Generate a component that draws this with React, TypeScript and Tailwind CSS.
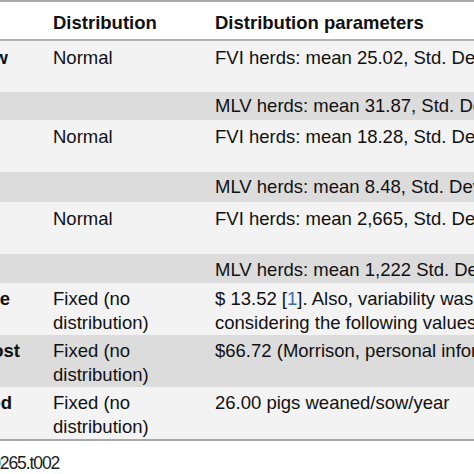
import React from 'react';

type Row = {
  name: string;
  namePad: string;
  dist: React.ReactNode;
  params: React.ReactNode;
  shade: 'light' | 'dark';
  height: string;
  pad: string;
};

const twoLines = (
  <>
    Fixed (no
    <br />
    distribution)
  </>
);

const rows: Row[] = [
  {
    name: 'Sows per herd per row',
    namePad: 'pr-[45px]',
    dist: 'Normal',
    params: 'FVI herds: mean 25.02, Std. Dev. 4.13',
    shade: 'light',
    height: 'h-[52px]',
    pad: 'pt-[4px]',
  },
  {
    name: '',
    namePad: '',
    dist: '',
    params: 'MLV herds: mean 31.87, Std. Dev. 5.91',
    shade: 'dark',
    height: 'h-[28px]',
    pad: 'pt-[1px]',
  },
  {
    name: '',
    namePad: '',
    dist: 'Normal',
    params: 'FVI herds: mean 18.28, Std. Dev. 3.40',
    shade: 'light',
    height: 'h-[52px]',
    pad: 'pt-[4px]',
  },
  {
    name: '',
    namePad: '',
    dist: '',
    params: 'MLV herds: mean 8.48, Std. Dev. 2.10',
    shade: 'dark',
    height: 'h-[30px]',
    pad: 'pt-[2px]',
  },
  {
    name: '',
    namePad: '',
    dist: 'Normal',
    params: 'FVI herds: mean 2,665, Std. Dev. 512',
    shade: 'light',
    height: 'h-[52px]',
    pad: 'pt-[4px]',
  },
  {
    name: '',
    namePad: '',
    dist: '',
    params: 'MLV herds: mean 1,222 Std. Dev. 301',
    shade: 'dark',
    height: 'h-[29px]',
    pad: 'pt-[3px]',
  },
  {
    name: 'Market price',
    namePad: 'pr-[43px]',
    dist: twoLines,
    params: (
      <>
        $ 13.52 [<span className="text-[#3a6ea8]">1</span>]. Also, variability was
        <br />
        considering the following values
      </>
    ),
    shade: 'light',
    height: 'h-[51px]',
    pad: 'pt-[3.5px] leading-[24px]',
  },
  {
    name: 'Feed cost',
    namePad: 'pr-[33px]',
    dist: twoLines,
    params: '$66.72 (Morrison, personal information)',
    shade: 'dark',
    height: 'h-[51px]',
    pad: 'pt-[4px] leading-[24px]',
  },
  {
    name: 'Pigs weaned',
    namePad: 'pr-[41px]',
    dist: twoLines,
    params: '26.00 pigs weaned/sow/year',
    shade: 'light',
    height: 'h-[51px]',
    pad: 'pt-[4px] leading-[24px]',
  },
];

export default function App() {
  return (
    <div
      className="w-[474px] h-[474px] overflow-hidden bg-white text-[18.5px] leading-[25px] text-[#111]"
      style={{ fontFamily: '"Liberation Sans", Arial, sans-serif' }}
    >
      <div className="w-[800px] border-t-2 border-[#a9a9a9]">
        <table className="table-fixed border-collapse w-[800px]">
          <colgroup>
            <col className="w-[53px]" />
            <col className="w-[162px]" />
            <col className="w-[585px]" />
          </colgroup>
          <thead>
            <tr className="h-[38px] bg-white border-b-2 border-[#b3b3b3]">
              <th className="p-0" />
              <th className="p-0 pt-[3px] text-left align-middle font-bold">Distribution</th>
              <th className="p-0 pt-[3px] text-left align-middle font-bold">Distribution parameters</th>
            </tr>
          </thead>
          <tbody>
            {rows.map((r, i) => (
              <tr
                key={i}
                className={`${r.height} ${r.shade === 'light' ? 'bg-[#f3f3f3]' : 'bg-[#dcdcdd]'}`}
              >
                <td className={`p-0 align-top ${r.pad}`}>
                  <div className={`flex justify-end overflow-hidden whitespace-nowrap font-bold ${r.namePad}`}>
                    {r.name}
                  </div>
                </td>
                <td className={`p-0 align-top whitespace-nowrap ${r.pad}`}>{r.dist}</td>
                <td className={`p-0 align-top whitespace-nowrap ${r.pad}`}>{r.params}</td>
              </tr>
            ))}
          </tbody>
        </table>
        <div className="border-t-2 border-[#a9a9a9]" />
      </div>
      <div className="mt-[10px] -ml-[73px] text-[17.5px] leading-[24px] tracking-[-1.1px] text-[#222] whitespace-nowrap">
        pone.0170265.t002
      </div>
    </div>
  );
}
